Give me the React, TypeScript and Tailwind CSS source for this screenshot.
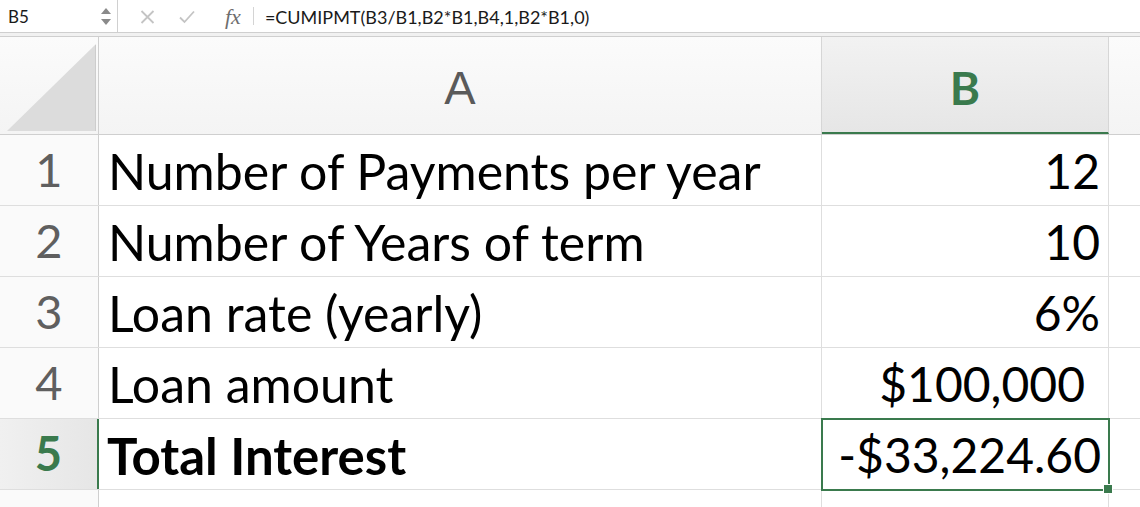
import React from "react";

const rows = [
  { n: 1, label: "Number of Payments per year", value: "12", pad: "pr-[8px]" },
  { n: 2, label: "Number of Years of term", value: "10", pad: "pr-[8px]" },
  { n: 3, label: "Loan rate (yearly)", value: "6%", pad: "pr-[8px]" },
  { n: 4, label: "Loan amount", value: "$100,000", pad: "pr-[23px]" },
];

const font = "font-['Lato',sans-serif]";

export default function App() {
  return (
    <div className="w-[1140px] h-[507px] overflow-hidden bg-white select-none">
      {/* formula bar */}
      <div className={`flex h-[33px] items-center border-b border-[#cfcfcf] ${font}`}>
        <div className="flex w-[118px] h-full items-center justify-between border-r border-[#d0d0d0] pl-[8px] pr-[6px]">
          <span className="text-[17px] pt-[2px] text-[#1a1a1a]">B5</span>
          <div className="flex flex-col gap-[5px] text-[#8a8a8a]">
            <svg width="10" height="6" viewBox="0 0 10 6"><path d="M5 0L10 6H0z" fill="currentColor" /></svg>
            <svg width="10" height="6" viewBox="0 0 10 6"><path d="M0 0H10L5 6z" fill="currentColor" /></svg>
          </div>
        </div>
        <div className="flex items-center gap-[24px] pl-[22px] pt-[2px] text-[#c4c4c4]">
          <svg width="15" height="14" viewBox="0 0 15 14"><path d="M1.5 1L13.5 13M13.5 1L1.5 13" stroke="currentColor" strokeWidth="1.8" /></svg>
          <svg width="16" height="14" viewBox="0 0 16 14"><path d="M1 7.5L5.5 12L15 1.5" stroke="currentColor" strokeWidth="1.8" fill="none" /></svg>
        </div>
        <span className="ml-[30px] font-['Liberation_Serif',serif] italic text-[22px] text-[#6e6e6e]">fx</span>
        <div className="ml-[12px] h-[18px] w-px bg-[#d4d4d4]" />
        <span className="ml-[11px] pt-[2px] text-[18px] text-[#1a1a1a]">=CUMIPMT(B3/B1,B2*B1,B4,1,B2*B1,0)</span>
      </div>
      <div className="h-[3px] bg-[#f1f1f1] border-b border-[#cfcfcf] box-content" />

      {/* column headers */}
      <div className="flex h-[98px] border-b border-[#cfcfcf] bg-gradient-to-b from-[#fbfbfb] to-[#f4f4f4]">
        <div className="w-[99px] shrink-0 border-r border-[#cfcfcf] flex items-end justify-end pr-[2px] pb-[3px]">
          <svg width="89" height="87" viewBox="0 0 89 87">
            <path d="M89 0V87H0z" fill="#dcdcdc" />
            <path d="M88.5 1V87" stroke="#cdcdcd" strokeWidth="1" />
          </svg>
        </div>
        <div className="w-[723px] shrink-0 border-r border-[#d6d6d6] flex items-center justify-center pt-[6px] font-['Liberation_Sans',sans-serif] text-[47px] text-[#5a5a5a]">
          A
        </div>
        <div className={`w-[287px] shrink-0 border-r border-[#d6d6d6] border-b-2 border-b-[#3a7a4d] flex items-center justify-center pt-[6px] bg-gradient-to-b from-[#f2f2f2] to-[#e6e6e6] ${font} font-bold text-[46px] text-[#3a7a4d]`}>
          B
        </div>
        <div className="flex-1" />
      </div>

      {/* rows */}
      {rows.map((r) => (
        <div key={r.n} className={`flex h-[71px] border-b border-[#dedede] ${font}`}>
          <div className="w-[99px] shrink-0 border-r border-[#cfcfcf] bg-[#fafafa] flex items-start justify-center pt-[11px] text-[47px] leading-none text-[#5f5f5f]">
            {r.n}
          </div>
          <div className="w-[723px] shrink-0 border-r border-[#dedede] flex items-start pl-[9px] pt-[11px] text-[50px] leading-none text-black">
            {r.label}
          </div>
          <div className={`w-[287px] shrink-0 border-r border-[#dedede] flex items-start justify-end ${r.pad} pt-[12px] text-[48px] leading-none text-black`}>
            {r.value}
          </div>
          <div className="flex-1" />
        </div>
      ))}

      {/* selected row 5 */}
      <div className={`flex h-[71px] border-b border-[#dedede] ${font}`}>
        <div className="w-[99px] shrink-0 border-r-2 border-r-[#3a7a4d] bg-gradient-to-r from-[#f0f0f0] to-[#e6e6e6] flex items-start justify-center pt-[11px] text-[47px] leading-none font-bold text-[#3a7a4d]">
          5
        </div>
        <div className="w-[722px] shrink-0 flex items-start pl-[8px] pt-[11px] text-[51px] leading-none font-bold text-black">
          Total Interest
        </div>
        <div className="relative w-[289px] shrink-0 -my-px h-[73px] border-2 border-[#3a7a4d] flex items-start justify-end pr-[7px] pt-[11px] text-[48px] leading-none text-black">
          -$33,224.60
          <div className="absolute -right-[5px] -bottom-[5px] w-[8px] h-[8px] bg-[#3a7a4d] border border-white box-content" />
        </div>
        <div className="flex-1" />
      </div>

      <div className="flex h-[20px]">
        <div className="w-[99px] shrink-0 border-r border-[#cfcfcf] bg-[#fafafa]" />
        <div className="w-[723px] shrink-0 border-r border-[#dedede]" />
        <div className="w-[287px] shrink-0 border-r border-[#dedede]" />
      </div>
    </div>
  );
}
